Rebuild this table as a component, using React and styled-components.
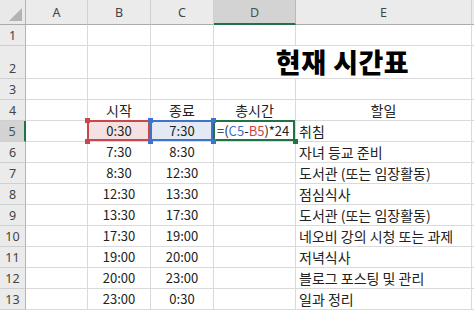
import React from "react";
import styled, { createGlobalStyle, css } from "styled-components";

const Global = createGlobalStyle`
  html, body {
    margin: 0;
    padding: 0;
    background: #ffffff;
  }
  body {
    font-family: "Noto Sans CJK KR", "Noto Sans", sans-serif;
  }
`;

const RANGE = {
  red: { line: "#c9464b", fill: "#f6e1e2" },
  blue: { line: "#3f72c8", fill: "#e3eaf6" },
  green: { line: "#217346", fill: "#ffffff" },
};

const Sheet = styled.div`
  display: grid;
  grid-template-columns: 26px 62px 63px 63px 82px 176px 1fr;
  grid-template-rows: 25px 21px 33px 21px repeat(10, 21px);
  width: 474px;
  height: 310px;
  overflow: hidden;
  background: #ffffff;
`;

const Corner = styled.div`
  background: #e9e9e9;
  border-right: 1px solid #b4b4b4;
  border-bottom: 1px solid #ababab;
  display: flex;
  align-items: flex-end;
  justify-content: flex-end;
  padding: 0 3px 3px 0;
  box-sizing: border-box;
`;

const ColHead = styled.div`
  box-sizing: border-box;
  background: ${(p) => (p.$active ? "#d3d3d3" : "#ebebeb")};
  color: ${(p) => (p.$active ? "#3d5a48" : "#444444")};
  border-right: 1px solid ${(p) => (p.$active ? "#b9b9b9" : "#cfcfcf")};
  border-bottom: ${(p) => (p.$active ? "2px solid #217346" : "1px solid #ababab")};
  font-family: "Noto Sans", "Liberation Sans", sans-serif;
  font-size: 12.5px;
  display: flex;
  align-items: center;
  justify-content: center;
  padding-top: ${(p) => (p.$active ? "1px" : "0")};
`;

const RowHead = styled.div`
  box-sizing: border-box;
  background: ${(p) => (p.$active ? "#d3d3d3" : "#ebebeb")};
  color: ${(p) => (p.$active ? "#3d5a48" : "#444444")};
  border-right: ${(p) => (p.$active ? "2px solid #217346" : "1px solid #b4b4b4")};
  border-bottom: 1px solid #cfcfcf;
  font-family: "Noto Sans", "Liberation Sans", sans-serif;
  font-size: 12.5px;
  display: flex;
  align-items: flex-end;
  justify-content: center;
  padding-bottom: 1px;
  line-height: 17px;
`;

const Cell = styled.div`
  position: relative;
  box-sizing: border-box;
  border-right: 1px solid #dadada;
  border-bottom: 1px solid #dadada;
  color: #222222;
  font-size: ${(p) => (p.$text ? "14px" : "13px")};
  line-height: 18px;
  white-space: nowrap;
  display: flex;
  align-items: flex-end;
  padding: 0 3px 1px;
  justify-content: ${(p) =>
    p.$align === "left" ? "flex-start" : "center"};
  ${(p) => p.$span && css`grid-column: span ${p.$span};`}
  ${(p) =>
    p.$range &&
    css`
      background: ${RANGE[p.$range].fill};
      &::after {
        content: "";
        position: absolute;
        inset: -1px 0 0 -1px;
        border: 2px solid ${RANGE[p.$range].line};
        pointer-events: none;
      }
    `}
`;

const Title = styled(Cell)`
  font-size: 27px;
  font-weight: 900;
  color: #000000;
  line-height: 32px;
  padding-bottom: 0;
  letter-spacing: 0.5px;
`;

const Handle = styled.span`
  position: absolute;
  width: 5px;
  height: 5px;
  background: ${(p) => RANGE[p.$color].line};
  z-index: 2;
  ${(p) => (p.$top ? "top: -3px;" : "bottom: -3px;")}
  ${(p) => (p.$left ? "left: -3px;" : "right: -3px;")}
`;

const Ref = styled.span`
  color: ${(p) => RANGE[p.$color].line};
`;

const cols = ["A", "B", "C", "D", "E", ""];

const rows = [
  ["0:30", "7:30", "취침"],
  ["7:30", "8:30", "자녀 등교 준비"],
  ["8:30", "12:30", "도서관 (또는 임장활동)"],
  ["12:30", "13:30", "점심식사"],
  ["13:30", "17:30", "도서관 (또는 임장활동)"],
  ["17:30", "19:00", "네오비 강의 시청 또는 과제"],
  ["19:00", "20:00", "저녁식사"],
  ["20:00", "23:00", "블로그 포스팅 및 관리"],
  ["23:00", "0:30", "일과 정리"],
];

const Corners = ({ color }) => (
  <>
    <Handle $color={color} $top $left />
    <Handle $color={color} $top />
    <Handle $color={color} $left />
    <Handle $color={color} />
  </>
);

const Blank = ({ n }) =>
  Array.from({ length: n }, (_, i) => <Cell key={i} />);

export default function App() {
  return (
    <>
      <Global />
      <Sheet>
        <Corner>
          <svg width="13" height="13" viewBox="0 0 13 13">
            <polygon points="13,0 13,13 0,13" fill="#b3b3b3" />
          </svg>
        </Corner>
        {cols.map((c, i) => (
          <ColHead key={i} $active={c === "D"}>
            {c}
          </ColHead>
        ))}

        <RowHead>1</RowHead>
        <Blank n={6} />

        <RowHead>2</RowHead>
        <Cell />
        <Cell />
        <Cell />
        <Title $span={2}>현재 시간표</Title>
        <Cell />

        <RowHead>3</RowHead>
        <Blank n={6} />

        <RowHead>4</RowHead>
        <Cell />
        <Cell $text>시작</Cell>
        <Cell $text>종료</Cell>
        <Cell $text>총시간</Cell>
        <Cell $text>할일</Cell>
        <Cell />

        {rows.map(([start, end, todo], i) => {
          const first = i === 0;
          return (
            <React.Fragment key={i}>
              <RowHead $active={first}>{i + 5}</RowHead>
              <Cell />
              <Cell $range={first ? "red" : undefined}>
                {start}
                {first && <Corners color="red" />}
              </Cell>
              <Cell $range={first ? "blue" : undefined}>
                {end}
                {first && <Corners color="blue" />}
              </Cell>
              <Cell $align="left" $range={first ? "green" : undefined}>
                {first && (
                  <>
                    =(<Ref $color="blue">C5</Ref>-<Ref $color="red">B5</Ref>)*24
                    <Handle $color="green" />
                  </>
                )}
              </Cell>
              <Cell $align="left" $text>
                {todo}
              </Cell>
              <Cell />
            </React.Fragment>
          );
        })}
      </Sheet>
    </>
  );
}
